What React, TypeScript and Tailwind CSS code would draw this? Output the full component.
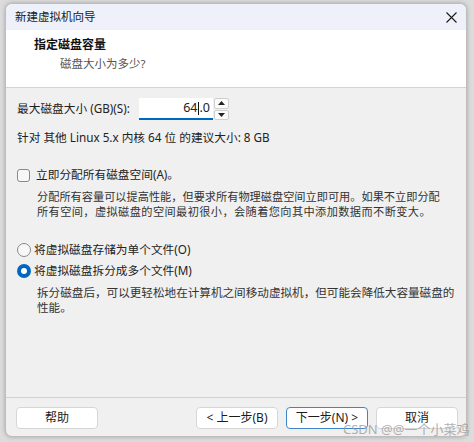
import type { ReactNode } from "react";

const FONT = { fontFamily: '"Noto Sans", "Noto Sans CJK SC", sans-serif' };

function WizButton(props: { children: ReactNode; primary?: boolean }) {
  return (
    <div
      className={`flex h-[22px] w-[82px] items-center justify-center rounded-[4px] border bg-white text-[12px] text-[#1b1b1b] ${
        props.primary ? "border-[#3f86c9]" : "border-[#d6d6d6]"
      }`}
    >
      {props.children}
    </div>
  );
}

function Spinner() {
  return (
    <div className="ml-[1px] flex h-[22px] w-[15px] flex-col gap-[1px]">
      <div className="flex flex-1 items-center justify-center rounded-[2px] border border-[#cfcfcf] bg-[#fbfbfb]">
        <svg width="7" height="4" viewBox="0 0 7 4">
          <path d="M0 4 L3.5 0 L7 4 Z" fill="#222" />
        </svg>
      </div>
      <div className="flex flex-1 items-center justify-center rounded-[2px] border border-[#cfcfcf] bg-[#fbfbfb]">
        <svg width="7" height="4" viewBox="0 0 7 4">
          <path d="M0 0 L3.5 4 L7 0 Z" fill="#222" />
        </svg>
      </div>
    </div>
  );
}

export default function App() {
  return (
    <div className="relative h-[442px] w-[474px] overflow-hidden bg-[#dcdcdc] pl-[5px] pt-[3px]" style={FONT}>
      <div className="flex h-[434px] w-[462px] flex-col overflow-hidden rounded-[7px] border border-[#bdbdbd] bg-[#f0f0f0] shadow-[0_0_4px_rgba(0,0,0,0.25)]">
        {/* title bar */}
        <div className="flex h-[26px] shrink-0 items-center justify-between bg-[#eef1f9] pl-[9px] pr-[9px]">
          <span className="text-[11.5px] text-[#1a1a1a]">新建虚拟机向导</span>
          <svg width="11" height="11" viewBox="0 0 11 11">
            <path d="M0.5 0.5 L10.5 10.5 M10.5 0.5 L0.5 10.5" stroke="#1a1a1a" strokeWidth="1.1" />
          </svg>
        </div>

        {/* header */}
        <div className="h-[58px] shrink-0 border-b border-[#d4d4d4] bg-white pl-[28px] pt-[7px]">
          <p className="text-[12px] font-bold leading-[16px] text-[#111]">指定磁盘容量</p>
          <p className="ml-[26px] mt-[3px] text-[11.5px] leading-[16px] text-[#555]">磁盘大小为多少?</p>
        </div>

        {/* body */}
        <div className="flex flex-1 flex-col pl-[11px] text-[11.7px] text-[#222]">
          <div className="mt-[10px] flex h-[22px] items-center">
            <span className="w-[122px] whitespace-nowrap">最大磁盘大小 (GB)(S):</span>
            <div className="flex h-[22px] w-[74px] items-center justify-end border-b-2 border-[#0067c0] bg-white pr-[3px] text-[12.5px]">
              <span>64</span>
              <span className="mx-[0.5px] inline-block h-[13px] w-[1px] bg-[#111]" />
              <span>.0</span>
            </div>
            <Spinner />
          </div>

          <p className="mt-[9px] whitespace-nowrap leading-[16px]">
            针对 其他 Linux 5.x 内核 64 位 的建议大小: 8 GB
          </p>

          <div className="mt-[22px] flex h-[16px] items-center">
            <span className="h-[13px] w-[13px] rounded-[3px] border border-[#8a8a8a] bg-[#f7f7f7]" />
            <span className="ml-[6px]">立即分配所有磁盘空间(A)。</span>
          </div>

          <div className="ml-[20px] mt-[7px] whitespace-nowrap text-[11.2px] leading-[14.5px] text-[#333]">
            <p>分配所有容量可以提高性能，但要求所有物理磁盘空间立即可用。如果不立即分配</p>
            <p className="tracking-[0.4px]">所有空间，虚拟磁盘的空间最初很小，会随着您向其中添加数据而不断变大。</p>
          </div>

          <div className="mt-[23px] flex h-[16px] items-center">
            <span className="h-[14px] w-[14px] rounded-full border border-[#8a8a8a] bg-[#f7f7f7]" />
            <span className="ml-[3px]">将虚拟磁盘存储为单个文件(O)</span>
          </div>
          <div className="mt-[5px] flex h-[16px] items-center">
            <span className="flex h-[14px] w-[14px] items-center justify-center rounded-full bg-[#0067c0]">
              <span className="h-[6px] w-[6px] rounded-full bg-white" />
            </span>
            <span className="ml-[3px]">将虚拟磁盘拆分成多个文件(M)</span>
          </div>

          <div className="ml-[20px] mt-[6px] whitespace-nowrap text-[11.6px] leading-[15px] text-[#333]">
            <p>拆分磁盘后，可以更轻松地在计算机之间移动虚拟机，但可能会降低大容量磁盘的</p>
            <p>性能。</p>
          </div>
        </div>

        {/* footer */}
        <div className="flex h-[39px] shrink-0 items-start border-t border-[#d0d0d0] pl-[10px] pr-[8px] pt-[9px]">
          <WizButton>帮助</WizButton>
          <div className="flex-1" />
          <div className="flex gap-[8px]">
            <WizButton>&lt; 上一步(B)</WizButton>
            <WizButton primary>下一步(N) &gt;</WizButton>
            <WizButton>取消</WizButton>
          </div>
        </div>
      </div>

      <span className="absolute left-[343px] top-[420px] whitespace-nowrap text-[13px] text-[rgba(150,150,150,0.75)]">
        CSDN @@一个小菜鸡
      </span>
    </div>
  );
}
